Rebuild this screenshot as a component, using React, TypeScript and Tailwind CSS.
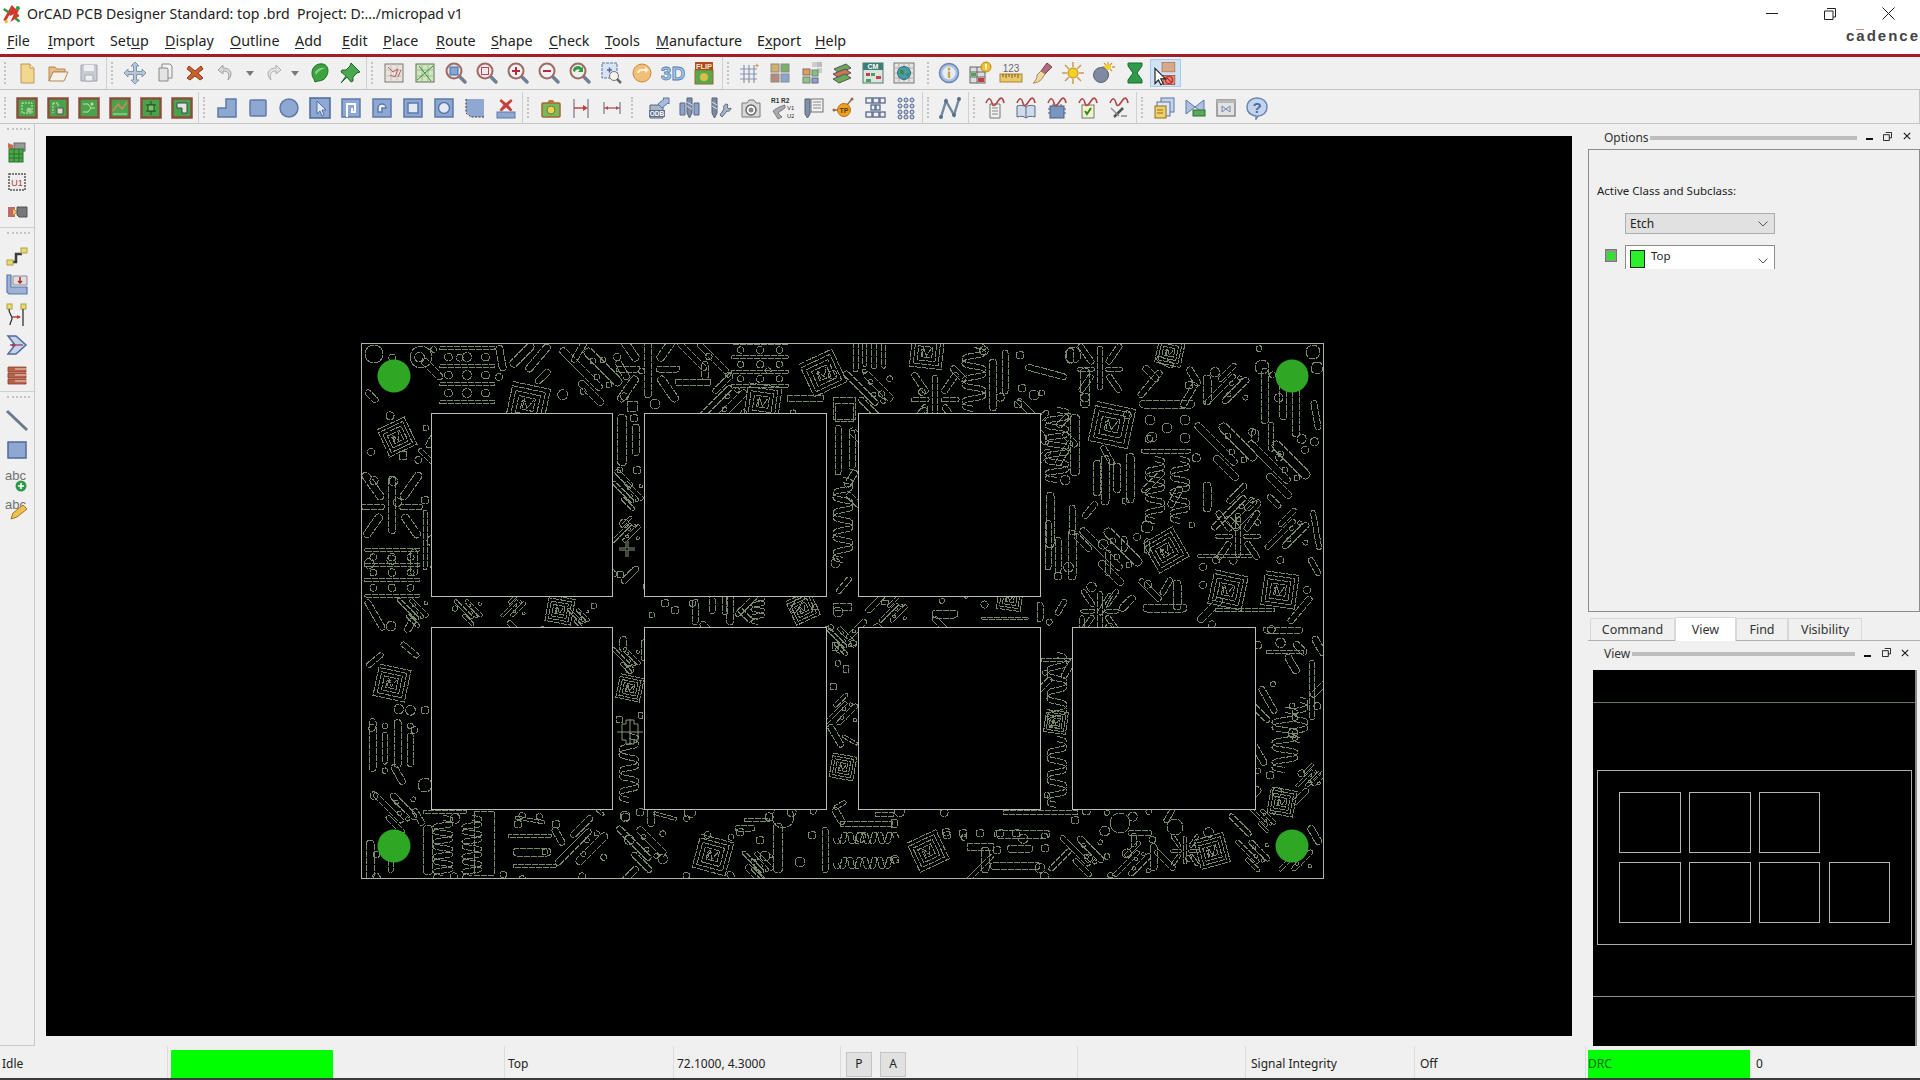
import type { ReactNode } from 'react';

// ---------- board artwork: everything collects into one big path ----------
const rad = (d: number) => (d * Math.PI) / 180;
const n1 = (v: number) => v.toFixed(1);

function pill(cx: number, cy: number, len: number, w: number, deg: number) {
  const r = w / 2;
  const a = rad(deg);
  const dx = Math.cos(a) * (len / 2 - r);
  const dy = Math.sin(a) * (len / 2 - r);
  const nx = -Math.sin(a) * r;
  const ny = Math.cos(a) * r;
  return `M${n1(cx - dx + nx)} ${n1(cy - dy + ny)}L${n1(cx + dx + nx)} ${n1(cy + dy + ny)}A${r} ${r} 0 0 0 ${n1(cx + dx - nx)} ${n1(cy + dy - ny)}L${n1(cx - dx - nx)} ${n1(cy - dy - ny)}A${r} ${r} 0 0 0 ${n1(cx - dx + nx)} ${n1(cy - dy + ny)}Z`;
}

function ring(cx: number, cy: number, r: number) {
  return `M${cx - r} ${cy}A${r} ${r} 0 1 0 ${cx + r} ${cy}A${r} ${r} 0 1 0 ${cx - r} ${cy}Z`;
}

function box(cx: number, cy: number, w: number, h: number) {
  return `M${cx - w / 2} ${cy - h / 2}h${w}v${h}h${-w}Z`;
}

function spiral(cx: number, cy: number, size: number, deg: number) {
  const a = rad(deg);
  const pt = (x: number, y: number) =>
    `${n1(cx + Math.cos(a) * x - Math.sin(a) * y)} ${n1(cy + Math.sin(a) * x + Math.cos(a) * y)}`;
  let s = size / 2;
  let d = `M${pt(-s, -s)}`;
  const step = size / 9;
  while (s > step) {
    d += `L${pt(s, -s)}L${pt(s, s)}L${pt(-s, s)}L${pt(-s, -s + step)}`;
    s -= step;
    d += `L${pt(-s, -s)}`;
  }
  d += `M${pt(-size / 8, size / 8)}L${pt(-size / 8, -size / 8)}L${pt(0, size / 8)}L${pt(size / 8, -size / 8)}`;
  return d;
}

// serpentine band: two rounded runs, one pitch apart
function wave(cx: number, cy: number, w: number, h: number, n: number, horizontal = false) {
  const thick = Math.min(2.6, h / n / 5);
  const build = (off: number) => {
    let d = '';
    for (let i = 0; i <= n * 16; i++) {
      const t = i / (n * 16);
      const along = -h / 2 + t * h + off;
      const sn = Math.sin(t * n * Math.PI * 2);
      const across = Math.sign(sn) * Math.pow(Math.abs(sn), 0.45) * (w / 2 - 2);
      const x = horizontal ? cx + along : cx + across;
      const y = horizontal ? cy + across : cy + along;
      d += `${i === 0 ? 'M' : 'L'}${n1(x)} ${n1(y)}`;
    }
    return d;
  };
  return build(-thick) + build(thick);
}

function hatch(cx: number, cy: number, flip = false, s = 1) {
  const a = flip ? -45 : 45;
  const m = flip ? -1 : 1;
  return [
    pill(cx - 14 * s, cy - 6 * s * m, 58 * s, 7 * s, a),
    pill(cx + 8 * s, cy - 8 * s * m, 50 * s, 9 * s, a),
    pill(cx - 4 * s, cy + 18 * s * m, 34 * s, 7 * s, a),
    ring(cx - 2 * s, cy - 14 * s * m, 3 * s),
    ring(cx + 2 * s, cy + 2 * s * m, 3 * s),
    ring(cx + 14 * s, cy + 10 * s * m, 3 * s),
    ring(cx + 22 * s, cy - 18 * s * m, 3.5 * s),
  ].join('');
}

function star(cx: number, cy: number, s = 1) {
  return [
    pill(cx, cy, 62 * s, 7 * s, 90),
    pill(cx - 20 * s, cy - 20 * s, 34 * s, 8 * s, 55),
    pill(cx + 20 * s, cy - 20 * s, 34 * s, 8 * s, -55),
    pill(cx - 20 * s, cy + 2 * s, 24 * s, 6 * s, 0),
    pill(cx + 20 * s, cy + 2 * s, 24 * s, 6 * s, 0),
    pill(cx - 20 * s, cy + 22 * s, 30 * s, 8 * s, -55),
    pill(cx + 20 * s, cy + 22 * s, 30 * s, 8 * s, 55),
  ].join('');
}

function rows(cx: number, cy: number, w: number, s = 1) {
  const o: string[] = [];
  [-24, -6, 12, 30].forEach((y) => o.push(pill(cx, cy + y * s, w, 3, 0)));
  [-15, 3, 21].forEach((y) => {
    o.push(ring(cx - w / 3, cy + y * s, 4 * s), ring(cx, cy + y * s, 4.5 * s), ring(cx + w / 3, cy + y * s, 4 * s));
  });
  return o.join('');
}

function vpills(cx: number, cy: number, s = 1) {
  return [
    pill(cx - 24 * s, cy, 66 * s, 8 * s, 90),
    pill(cx - 9 * s, cy + 4 * s, 40 * s, 6 * s, 90),
    pill(cx + 7 * s, cy - 2 * s, 60 * s, 9 * s, 90),
    pill(cx + 23 * s, cy + 6 * s, 42 * s, 7 * s, 90),
    ring(cx - 9 * s, cy - 24 * s, 3.5 * s),
    ring(cx + 23 * s, cy - 24 * s, 3.5 * s),
    ring(cx - 9 * s, cy + 32 * s, 3.5 * s),
  ].join('');
}

// small parts scattered over the gaps so the copper looks as busy as the real board
function filler() {
  let seed = 20240611;
  const rnd = () => {
    seed = (seed * 1664525 + 1013904223) % 4294967296;
    return seed / 4294967296;
  };
  const out: string[] = [];
  for (let x = 368; x < 1322; x += 21) {
    for (let y = 348; y < 876; y += 21) {
      const r = rnd();
      const px = x + rnd() * 10;
      const py = y + rnd() * 10;
      if (r < 0.16) out.push(ring(+px.toFixed(1), +py.toFixed(1), 2.5 + rnd() * 2.5));
      else if (r < 0.26) {
        const deg = [45, -45, 90, 60, -60][Math.floor(rnd() * 5)];
        out.push(pill(px, py, 14 + rnd() * 16, 5 + rnd() * 2, deg));
      }
    }
  }
  return out.join('');
}

const boardPath = [
  filler(),
  // top strip
  ring(374, 354, 9), ring(421, 357, 11), rows(467, 372, 56), pill(501, 358, 26, 7, 80),
  pill(522, 355, 32, 8, -45), pill(538, 358, 34, 7, -50), spiral(528, 404, 38, 12),
  hatch(595, 375), ring(603, 360, 3), star(648, 367), box(632, 406, 10, 10), ring(655, 404, 5),
  pill(713, 358, 42, 6, 45), pill(692, 356, 40, 6, 45), box(693, 382, 35, 6),
  rows(760, 362, 58, 0.8), spiral(823, 373, 36, -25), spiral(763, 402, 34, 8),
  box(805, 398, 36, 6), hatch(726, 398, true, 0.8), box(844, 408, 22, 22), hatch(872, 393, false, 0.8),
  vpills(870, 352, 0.6), spiral(927, 352, 32, 6), star(935, 398, 0.75), wave(974, 377, 28, 64, 3),
  pill(993, 385, 52, 7, 90), pill(1005, 372, 44, 6, 90), ring(1020, 355, 4), ring(1022, 388, 4), ring(1034, 395, 5),
  ring(1018, 404, 4), pill(1046, 372, 42, 6, 15), pill(1028, 410, 30, 6, 45),
  // right block
  ring(1073, 355, 8), star(1100, 368, 0.7), pill(1085, 388, 40, 9, 90), spiral(1112, 425, 40, 12),
  spiral(1170, 352, 26, 12), pill(1150, 384, 34, 6, -50), pill(1165, 362, 18, 6, 30), ring(1189, 385, 4),
  pill(1207, 390, 30, 8, 90), hatch(1230, 385, true, 0.7), ring(1262, 367, 7), ring(1313, 352, 7), ring(1317, 368, 6),
  pill(1265, 396, 56, 7, 90), pill(1283, 400, 40, 7, 90), pill(1296, 412, 50, 7, 90), pill(1316, 415, 30, 6, 80),
  wave(1057, 445, 28, 70, 4), pill(1075, 445, 62, 9, 90), pill(1167, 404, 55, 8, 0),
  ring(1150, 420, 5), ring(1167, 428, 5), ring(1185, 420, 5), ring(1152, 437, 5), ring(1185, 438, 5), pill(1166, 451, 50, 4, 0),
  wave(1155, 490, 24, 62, 3), wave(1180, 490, 24, 62, 3), pill(1097, 478, 36, 7, 90),
  pill(1105, 480, 50, 8, 90), pill(1117, 478, 30, 7, 90), pill(1130, 478, 50, 8, 90), pill(1090, 510, 20, 6, -50),
  hatch(1230, 450), hatch(1283, 468), hatch(1240, 508, true, 0.8), pill(1207, 497, 30, 8, 90),
  pill(1050, 520, 56, 8, 90), pill(1072, 520, 30, 6, 90), hatch(1290, 530, true, 0.7), star(1238, 535, 0.7), pill(1316, 530, 40, 5, 80),
  pill(1048, 545, 50, 6, 90), pill(1058, 555, 36, 6, 90), pill(1072, 555, 50, 8, 90), ring(1058, 576, 4), hatch(1115, 555),
  spiral(1166, 550, 34, -30), ring(1147, 527, 6), ring(1192, 525, 3), pill(1225, 556, 55, 3, 0),
  spiral(1228, 590, 34, 12), spiral(1280, 590, 34, 8), ring(1203, 567, 3.5), ring(1203, 585, 3.5), ring(1307, 590, 3.5),
  pill(1165, 608, 44, 8, 0), pill(1177, 595, 30, 8, 90), pill(1150, 590, 30, 6, 45), star(1100, 610, 0.6), pill(1245, 610, 60, 3, 0),
  pill(1210, 610, 34, 7, -45), pill(1300, 610, 34, 6, -50),
  // gaps between the cut-outs
  pill(622, 440, 52, 9, 90), pill(636, 440, 32, 7, 90), ring(634, 418, 4), ring(637, 470, 4), ring(620, 470, 3),
  hatch(630, 495, false, 0.5), hatch(628, 530, true, 0.45), box(620, 574, 6, 6), pill(630, 575, 22, 6, -45),
  box(844, 412, 18, 18), pill(838, 450, 50, 6, 90), pill(852, 450, 40, 6, 90), wave(843, 520, 24, 80, 4), pill(844, 585, 20, 5, -50),
  spiral(630, 688, 24, 12), hatch(628, 660, false, 0.45), wave(629, 768, 24, 64, 3), box(619, 719, 6, 6), box(640, 715, 4, 6),
  hatch(843, 640, false, 0.5), box(835, 646, 6, 8), box(846, 669, 5, 7), box(833, 686, 6, 6), hatch(843, 710, true, 0.55),
  spiral(843, 767, 24, 10), pill(850, 740, 18, 3, 30), pill(840, 805, 14, 4, -30),
  wave(1057, 690, 24, 70, 3), spiral(1056, 722, 22, 8), wave(1057, 772, 24, 66, 3), pill(1056, 660, 30, 3, 0),
  // middle strip
  hatch(470, 612, false, 0.45), hatch(515, 606, true, 0.4), spiral(560, 610, 26, 10), ring(594, 606, 3), hatch(580, 618, false, 0.35),
  spiral(803, 608, 26, -25), wave(758, 610, 18, 24, 2), pill(730, 610, 30, 7, 90), ring(665, 603, 4), ring(675, 610, 4), pill(712, 605, 18, 6, 90),
  pill(695, 612, 26, 6, 90), pill(725, 605, 20, 5, 90), ring(652, 615, 3), pill(745, 615, 18, 5, 45), ring(838, 612, 5),
  box(842, 607, 18, 7), hatch(895, 610, true, 0.45), pill(945, 614, 26, 8, 0), box(885, 602, 7, 4), pill(1005, 618, 48, 2, 0),
  spiral(1010, 598, 24, 8), pill(1040, 612, 20, 6, 90),
  // left strip
  spiral(397, 437, 30, -25), ring(371, 452, 3.5), box(403, 455, 7, 8), star(392, 505, 0.95), ring(426, 428, 3),
  pill(427, 457, 22, 4, 45), ring(425, 500, 4), pill(425, 540, 60, 4, 90), rows(392, 570, 56, 0.85),
  hatch(415, 612, false, 0.5), pill(375, 615, 34, 6, 60), spiral(392, 683, 32, 12), pill(375, 660, 20, 5, -40), pill(410, 650, 22, 5, 40),
  vpills(392, 745, 0.8), ring(425, 710, 4), hatch(398, 812, false, 0.7), ring(425, 785, 7), pill(428, 850, 50, 9, 90), pill(370, 860, 40, 8, 90),
  // bottom strip
  wave(443, 848, 24, 60, 4), wave(472, 848, 24, 60, 4), pill(445, 812, 44, 3, 0), box(484, 843, 20, 64),
  pill(530, 820, 30, 3, 10), ring(518, 824, 4), pill(530, 836, 44, 3, 0), pill(532, 852, 38, 8, 0), ring(545, 852, 3), pill(535, 866, 44, 3, 0),
  ring(556, 824, 4), hatch(585, 842, true, 0.85), hatch(645, 848, false, 0.8), pill(600, 812, 10, 3, 40), ring(625, 816, 5),
  ring(640, 812, 4), pill(665, 816, 24, 3, 15), ring(690, 812, 6),
  spiral(713, 855, 34, 15), ring(740, 832, 4), pill(745, 828, 20, 6, 0), ring(760, 840, 4), pill(778, 848, 50, 9, 90), ring(765, 856, 5),
  hatch(760, 865, false, 0.5), ring(783, 817, 11), pill(757, 820, 26, 3, 0), ring(800, 862, 5), ring(812, 835, 4), pill(825, 850, 46, 6, 90),
  wave(866, 838, 16, 60, 4, true), wave(866, 863, 16, 60, 4, true), box(866, 824, 52, 5), box(884, 814, 18, 4), box(894, 823, 6, 8),
  spiral(928, 851, 32, -25), ring(946, 832, 4), ring(963, 833, 4), ring(980, 833, 4), ring(1000, 833, 4), ring(1016, 833, 4),
  pill(1022, 834, 56, 8, 0), ring(947, 835, 4), box(980, 847, 26, 7), pill(1020, 849, 26, 7, 0), ring(997, 850, 4), ring(1045, 848, 4),
  pill(1015, 866, 50, 7, 0), pill(980, 868, 36, 4, -45), pill(985, 860, 26, 8, 90), ring(1040, 868, 5),
  box(1040, 812, 74, 4), ring(1075, 820, 4), hatch(1085, 855, false, 0.7), pill(1060, 860, 30, 5, -45), ring(1120, 823, 10), pill(1140, 833, 24, 5, 0),
  hatch(1135, 860, true, 0.6), ring(1175, 827, 8), pill(1165, 860, 28, 6, 45), spiral(1212, 851, 30, -15), star(1185, 850, 0.45),
  hatch(1255, 855, false, 0.55), pill(1240, 825, 30, 5, 45), hatch(1298, 856, true, 0.55), spiral(1282, 802, 26, 10),
  wave(1285, 740, 30, 60, 3), wave(1300, 720, 20, 40, 2), pill(1285, 652, 38, 3, 0), pill(1283, 630, 40, 6, 0), pill(1312, 690, 60, 5, 90),
  ring(1270, 775, 4), pill(1268, 700, 30, 6, 60), hatch(1310, 776, true, 0.4), hatch(1265, 820, false, 0.4),
].join('');

const cutouts = [
  [431, 413, 181, 183], [644, 413, 182, 183], [858, 413, 182, 183],
  [431, 627, 181, 182], [644, 627, 182, 182], [858, 627, 182, 182], [1072, 627, 183, 182],
];
const holes = [[394, 376], [1292, 376], [394, 846], [1292, 846]];

function Board() {
  return (
    <svg viewBox="46 136 1526 900" className="block w-full h-full">
      <defs>
        <clipPath id="brd"><rect x="362" y="343" width="962" height="535" /></clipPath>
      </defs>
      <g clipPath="url(#brd)">
        <path d={boardPath} fill="none" stroke="#7a8a6c" strokeWidth="1" strokeDasharray="6 1" shapeRendering="crispEdges" />
      </g>
      <path d="M622 724h4v-4h8v4h4v16h-4v4h-8v-4h-4zM617 732h26M630 719v26" fill="none" stroke="#87977a" />
      <path d="M627 541v16M619 549h16" fill="none" stroke="#87977a" strokeWidth="3" />
      <path d="M627 541v16M619 549h16" fill="none" stroke="#000" />
      {cutouts.map(([x, y, w, h]) => (
        <rect key={`${x}-${y}`} x={x + 0.5} y={y + 0.5} width={w} height={h} fill="#000" stroke="#b9bdb4" />
      ))}
      <rect x="361.5" y="343.5" width="962" height="535" fill="none" stroke="#aeb3a7" />
      {holes.map(([x, y]) => (
        <circle key={`${x}-${y}`} cx={x} cy={y} r="16.5" fill="#2ea724" />
      ))}
    </svg>
  );
}

// ---------- toolbar icons ----------
function Ic({ children, className = 'w-[24px] h-[24px]' }: { children: ReactNode; className?: string }) {
  return <svg viewBox="0 0 24 24" className={className}>{children}</svg>;
}

const Mag = ({ lens = '#eaf0f8', children }: { lens?: string; children?: ReactNode }) => (
  <Ic>
    <path d="M15 15l6 6" stroke="#6f7f96" strokeWidth="3.5" strokeLinecap="round" />
    <circle cx="10" cy="10" r="7.5" fill={lens} stroke="#a06a60" strokeWidth="2" />
    {children}
  </Ic>
);

const Green = ({ children }: { children: ReactNode }) => (
  <Ic>
    <rect x="2.5" y="2.5" width="19" height="19" fill="#4aa34a" stroke="#8a4f3c" strokeWidth="2.5" />
    {children}
  </Ic>
);

const Blue = ({ children }: { children: ReactNode }) => (
  <Ic>
    <g fill="#8fa8d2" stroke="#5c79aa" strokeWidth="1.5">{children}</g>
  </Ic>
);

const Wave = ({ children }: { children: ReactNode }) => (
  <Ic>
    {children}
    <path d="M3 7c3-7 5-4 6 0s3 3 6-2 5-3 6 2" fill="none" stroke="#b0484a" strokeWidth="1.6" />
  </Ic>
);

const ic: Record<string, ReactNode> = {
  file: <Ic><path d="M6 3h9l4 4v15H6z" fill="#f3d690" stroke="#b89a5c" /><path d="M15 3v4h4" fill="#fff3cc" stroke="#b89a5c" /></Ic>,
  open: <Ic><path d="M3 6h6l2 2h8v3H7l-4 9z" fill="#e9bd83" stroke="#b3875a" /><path d="M7 11h15l-4 9H3z" fill="#f6f1e6" stroke="#b3875a" /></Ic>,
  save: <Ic><path d="M4 4h16v16H4z" fill="#c9ccd2" stroke="#9ea2aa" /><path d="M7 4h10v6H7z" fill="#eef0f2" /><path d="M8 14h8v6H8z" fill="#eef0f2" stroke="#a8acb2" /></Ic>,
  move: <Ic><path d="M12 1l4 4h-2.5v5.5H19V8l4 4-4 4v-2.5h-5.5V19H16l-4 4-4-4h2.5v-5.5H5V16l-4-4 4-4v2.5h5.5V5H8z" fill="#b5c6d8" stroke="#7f95aa" /></Ic>,
  copy: <Ic><path d="M9 3h8l2 2v12H9z" fill="#f2f2f2" stroke="#888" /><path d="M6 7h8l1 1v12H6z" fill="#e4e4e4" stroke="#888" /></Ic>,
  del: <Ic><path d="M6 5l6 5 6-5 2 3-5 4 5 5-3 2-5-4-5 4-3-2 5-5-5-4z" fill="#c8612c" stroke="#8e3d1c" /></Ic>,
  undo: <Ic><path d="M9 4L4 9l5 4v-3c5 0 7 3 5 9 5-5 4-12-5-12z" fill="#d6d6d6" stroke="#a2a2a2" /></Ic>,
  redo: <Ic><path d="M15 4l5 5-5 4v-3c-5 0-7 3-5 9-5-5-4-12 5-12z" fill="#e2e2e2" stroke="#b0b0b0" /></Ic>,
  drop: <svg viewBox="0 0 10 10" className="w-[10px] h-[10px]"><path d="M1 3h8L5 8z" fill="#7a7a7a" /></svg>,
  ball: <Ic><path d="M4 12c0-6 5-10 11-9 5 1 6 7 4 11-2 5-6 6-9 6l-3 1-1-3c-1-1-2-3-2-6z" fill="#3ba33b" stroke="#1f6b28" /><path d="M7 11c3-4 7-5 10-4-3 1-7 3-9 7z" fill="#8cd08c" /></Ic>,
  pin: <Ic><path d="M13 2l9 9-3 1-4 4 0 4-2 1-4-5-6 6 5-7-5-4 1-2 4 0 4-4z" fill="#4aa84f" stroke="#1e6a2a" /></Ic>,
  rats: <Ic><rect x="3" y="3" width="18" height="18" fill="#e9e3dc" stroke="#777" /><path d="M3 9h18M3 15h18M9 3v18M15 3v18" stroke="#c4c4c4" /><path d="M6 6l5 5 5-3-3 8-5-2M16 16l3-7" fill="none" stroke="#c05a62" /></Ic>,
  board: <Ic><rect x="3" y="3" width="18" height="18" fill="#cfe6c0" stroke="#5f7052" /><path d="M3 9h18M3 15h18M9 3v18M15 3v18" stroke="#9dba8e" /><path d="M4 19L20 5M6 5l12 15" stroke="#3b8a3b" fill="none" /></Ic>,
  zoomFit: <Mag lens="#dfe9f6"><rect x="6" y="6" width="8" height="8" fill="#88a4d2" stroke="#486b9f" /></Mag>,
  zoomWin: <Mag lens="#f5e7ea"><rect x="6.5" y="6.5" width="7" height="7" fill="none" stroke="#b04a60" /></Mag>,
  zoomIn: <Mag lens="#eef1f7"><path d="M10 6v8M6 10h8" stroke="#b62a36" strokeWidth="2" /></Mag>,
  zoomOut: <Mag lens="#eef1f7"><path d="M6 10h8" stroke="#b62a36" strokeWidth="2" /></Mag>,
  zoomPrev: <Mag lens="#eaf1ea"><path d="M5 10a5 5 0 019-3l1-2v6h-5l2-2a3 3 0 00-5 2z" fill="#2f9a3f" /></Mag>,
  zoomWorld: <Ic><rect x="3" y="2" width="15" height="15" fill="#d8e4f4" stroke="#5675a5" strokeDasharray="3 1" /><path d="M8 9h5M10.500 6.500v5" stroke="#4d6c9c" strokeWidth="1.500" /><circle cx="15" cy="15" r="4.500" fill="#f2f2f2" stroke="#8a7060" /><path d="M18 18l4 4" stroke="#666" strokeWidth="2.500" /></Ic>,
  refresh: <Ic><circle cx="12" cy="12" r="9" fill="#f0c078" stroke="#c88a3a" /><path d="M7 12a5 5 0 015-4h3v-2l4 3-4 3v-2h-3a3 3 0 00-3 2z" fill="#fff3dc" /></Ic>,
  threeD: <Ic><text x="12" y="19" textAnchor="middle" fontSize="19" fontWeight="700" fontFamily="'Liberation Sans',sans-serif" fill="#a9c6e4" stroke="#4f7fb0" strokeWidth="0.800">3D</text></Ic>,
  flip: <Ic><rect x="3" y="1" width="18" height="8" fill="#b04a20" /><text x="12" y="8" textAnchor="middle" fontSize="7.500" fontWeight="700" fontFamily="'Liberation Sans',sans-serif" fill="#f8e8c0">FLIP</text><rect x="3" y="9" width="18" height="14" fill="#59a84a" stroke="#8a6a2c" /><circle cx="12" cy="16" r="4" fill="#d8c048" /></Ic>,
  grid: <Ic><path d="M3 8h17M3 13h17M3 18h17M7 4v18M12 4v18M17 4v18" stroke="#8793b0" strokeWidth="1.200" /><path d="M20 2l.7 2 2 .5-2 .5-.7 2-.7-2-2-.5 2-.5z" fill="#e09050" /></Ic>,
  colors: <Ic><rect x="3" y="3" width="8" height="8" fill="#d2b068" stroke="#8a8a8a" /><rect x="13" y="3" width="8" height="8" fill="#79b06a" stroke="#8a8a8a" /><rect x="3" y="13" width="8" height="8" fill="#b88a7a" stroke="#8a8a8a" /><rect x="13" y="13" width="8" height="8" fill="#8ca6d0" stroke="#8a8a8a" /></Ic>,
  blocks: <Ic><rect x="13" y="1" width="5" height="5" fill="#ccc" /><rect x="18" y="1" width="5" height="5" fill="#bbb" /><rect x="18" y="7" width="5" height="5" fill="#ccc" /><rect x="4" y="8" width="7" height="6" fill="#e0a060" stroke="#866" /><rect x="4" y="16" width="7" height="6" fill="#9abf8a" stroke="#686" /><rect x="13" y="9" width="6" height="6" fill="#88c088" stroke="#686" /><rect x="13" y="17" width="6" height="5" fill="#8aa4d0" stroke="#668" /></Ic>,
  layers: <Ic><path d="M4 8l12-5 5 4-12 5z" fill="#6aa85a" stroke="#555" /><path d="M3 13l12-5 6 4-12 5z" fill="#c8735a" stroke="#555" /><path d="M3 18l12-5 6 4-12 5z" fill="#6aa85a" stroke="#555" /></Ic>,
  cm: <Ic><rect x="2" y="2" width="20" height="20" fill="#dbe4de" stroke="#4d7a70" /><rect x="2" y="2" width="20" height="7" fill="#3d7f78" /><text x="12" y="8" textAnchor="middle" fontSize="7" fontWeight="700" fontFamily="'Liberation Sans',sans-serif" fill="#fff">CM</text><path d="M5 12h4v3H5zM15 15h5v3h-5z" fill="#c8404a" /><path d="M10 12h4v3h-4zM5 18h5v3H5z" fill="#4aa35a" /></Ic>,
  globe: <Ic><rect x="2" y="2" width="20" height="20" fill="#e4e4e4" stroke="#777" /><path d="M2 7h20M2 12h20M2 17h20M7 2v20M12 2v20M17 2v20" stroke="#aaa" /><circle cx="12" cy="12" r="6.500" fill="#4b9aa8" stroke="#2d6a78" /><path d="M8 9c3-1 4 1 4 3s-3 2-4 0zM14 13l3-1-1 4z" fill="#3a8a4a" /></Ic>,
  info: <Ic><circle cx="12" cy="12" r="9.500" fill="#a9bfe0" stroke="#6a85b5" strokeWidth="1.500" /><circle cx="12" cy="12" r="6.500" fill="#e6edf8" /><circle cx="12" cy="8" r="1.500" fill="#c9a83a" /><rect x="10.800" y="10.500" width="2.400" height="6.500" fill="#c9a83a" /></Ic>,
  tableInfo: <Ic><rect x="2" y="6" width="15" height="16" fill="#dcdcdc" stroke="#666" /><path d="M2 11h15M2 16h15M9 6v16" stroke="#666" /><rect x="3" y="12" width="5" height="3" fill="#4aa35a" /><rect x="10" y="17" width="6" height="4" fill="#c04040" /><circle cx="18" cy="6" r="5" fill="#f0c030" stroke="#b08a20" /><rect x="17.300" y="3" width="1.400" height="5.500" fill="#fff" /></Ic>,
  ruler: <Ic><text x="12" y="11" textAnchor="middle" fontSize="10" fontWeight="500" fontFamily="'Liberation Sans',sans-serif" fill="#6a6a6a">123</text><rect x="1" y="13" width="22" height="8" fill="#e8c868" stroke="#a88830" /><path d="M4 13v3M7 13v4M10 13v3M13 13v4M16 13v3M19 13v4" stroke="#7a5a20" /></Ic>,
  brush: <Ic><path d="M17 2l5 4-7 7-4-3z" fill="#b06a78" stroke="#7a4050" /><path d="M11 10l4 3-2 3c-2 4-6 6-10 6 3-2 4-5 4-8z" fill="#f0d8a0" stroke="#a88850" /></Ic>,
  sun: <Ic><circle cx="12" cy="12" r="5" fill="#f4d020" stroke="#c08a20" /><path d="M12 1v5M12 18v5M1 12h5M18 12h5M4 4l4 4M16 16l4 4M20 4l-4 4M8 16l-4 4" stroke="#c89a50" strokeWidth="1.500" /></Ic>,
  bomb: <Ic><path d="M16 1v4M16 11v2M10 6h3M20 6h3M12 2l3 3M20 10l-2-2M20 2l-3 3" stroke="#c89a50" strokeWidth="1.300" /><circle cx="16" cy="6" r="3" fill="#f4d020" /><circle cx="9" cy="14" r="7.500" fill="#7f8aa0" stroke="#56607a" /></Ic>,
  hourglass: <Ic><path d="M5 2h14v3l-5 7 5 7v3H5v-3l5-7-5-7z" fill="#2f9a4a" stroke="#1a6a30" /></Ic>,
  noEntry: <Ic className="w-[30px] h-[28px]"><rect x="9" y="3" width="11" height="8" fill="#d8a888" stroke="#a07050" strokeWidth="0.600" /><rect x="10" y="14" width="10" height="8" fill="#e08a7a" stroke="#a04030" strokeWidth="0.600" /><circle cx="15" cy="18" r="3" fill="none" stroke="#c02020" /><path d="M13 16l4 4" stroke="#c02020" /><path d="M3 8v13l3-3 2 4 2-1-2-4h4z" fill="#fff" stroke="#222" strokeWidth="1" /></Ic>,
  g1: <Green><rect x="7" y="7" width="10" height="10" fill="none" stroke="#cfe8c0" strokeDasharray="2 1" /><circle cx="14" cy="14" r="2.500" fill="#9ad08a" /></Green>,
  g2: <Green><path d="M7 7h5v5M7 7v10" fill="none" stroke="#cfe8c0" strokeDasharray="2 1" /><rect x="11" y="12" width="6" height="6" fill="#d8d8c8" stroke="#555" /></Green>,
  g3: <Green><path d="M6 8h5l3 4-3 4H6M14 12h4" fill="none" stroke="#bde0aa" /><circle cx="15" cy="8" r="1.500" fill="#bde0aa" /></Green>,
  g4: <Green><path d="M5 15l5-7 4 5 5-7" fill="none" stroke="#d88060" strokeWidth="1.500" /><path d="M5 18h14" stroke="#bde0aa" /></Green>,
  g5: <Green><path d="M12 5v14M7 9h10M7 15h10" stroke="#234f20" /><rect x="9" y="9" width="6" height="6" fill="#7cc06c" stroke="#234f20" /></Green>,
  g6: <Green><path d="M7 7h10v10h-5v-5H7z" fill="#e4e4d8" stroke="#345" /></Green>,
  sL: <Blue><path d="M3 21V12h8V3h10v18z" /></Blue>,
  sRect: <Blue><rect x="4" y="4" width="16" height="16" rx="1" /></Blue>,
  sCirc: <Blue><circle cx="12" cy="12" r="9" /></Blue>,
  sArrow: <Ic><rect x="2" y="2" width="20" height="20" fill="#8fa8d2" stroke="#4b689a" strokeWidth="1.500" /><path d="M9 5v13l3-3 2 5 2-1-2-5h4z" fill="#dfe8f6" stroke="#3b5a8c" strokeWidth="0.800" /></Ic>,
  sVoid: <Blue><rect x="3" y="3" width="18" height="18" /><path d="M8 21V8h8v8h-3v-4" fill="none" stroke="#fff" strokeWidth="2" /></Blue>,
  sArc: <Blue><rect x="3" y="3" width="18" height="18" /><path d="M8 16v-4a4 4 0 118 0h-4v4z" fill="#eef2f8" /></Blue>,
  sFrame: <Blue><rect x="3" y="3" width="18" height="18" /><rect x="7" y="7" width="10" height="10" fill="#e4eaf4" /></Blue>,
  sFrameC: <Blue><rect x="3" y="3" width="18" height="18" /><circle cx="12" cy="12" r="5.500" fill="#e4eaf4" /></Blue>,
  sPart: <Ic><path d="M3 3h18v18H8l-5-5z" fill="#8fa8d2" /><path d="M3 3v14l5 4h13" fill="none" stroke="#333" strokeDasharray="2 1.500" /></Ic>,
  sDel: <Ic><rect x="3" y="16" width="18" height="6" fill="#8fa8d2" stroke="#5c79aa" /><path d="M7 3l5 4 5-4 1.500 2-4 4 4 5-2 1.500-4.500-4-4.500 4-2-1.500 4-5-4-4z" fill="#c8403a" /></Ic>,
  pkg: <Ic><rect x="3" y="7" width="18" height="14" rx="1" fill="#79b85c" stroke="#a06a30" strokeWidth="1.500" /><path d="M8 7l2-3h4l2 3z" fill="#c0763a" /><circle cx="12" cy="14" r="4" fill="#f0d050" stroke="#6a8030" /></Ic>,
  dimV: <Ic><path d="M5 3v19M19 3v19" stroke="#90909a" strokeWidth="1.500" /><path d="M5 12h11" stroke="#c04040" strokeWidth="1.500" /><path d="M19 12l-5-3v6z" fill="#c04040" /></Ic>,
  dimH: <Ic><path d="M4 6v12M20 6v12" stroke="#90909a" strokeWidth="1.500" /><path d="M4 12h16" stroke="#b05050" strokeWidth="1.300" /><path d="M5 12l3-2v4zM19 12l-3-2v4z" fill="#b05050" /></Ic>,
  odb: <Ic><path d="M4 9h13v13H4z" fill="#aab6c8" stroke="#56667f" /><rect x="3" y="14" width="16" height="7" fill="#5f7290" /><text x="11" y="20" textAnchor="middle" fontSize="6.500" fontWeight="700" fontFamily="'Liberation Sans',sans-serif" fill="#fff">ODB</text><path d="M12 8l6-5-1-1h6v6l-1-1-6 5z" fill="#a8bcd8" stroke="#5c78a0" /></Ic>,
  drill: <Ic><path d="M10 2h5v15l-2.500 5-2.500-5z" fill="#8090a8" stroke="#52607a" /><path d="M3 7h5v12H3zM17 7h5v12h-5z" fill="#8fa4c8" stroke="#56688a" /><path d="M10 6l5 3M10 10l5 3" stroke="#dde" /></Ic>,
  drillW: <Ic><path d="M4 2h5v15l-2.500 5L4 17z" fill="#7e8aa0" stroke="#52607a" /><path d="M4 6l5 3M4 10l5 3" stroke="#dde" /><path d="M19 8c-3 0-4 3-3 5l-4 6 2 2 5-6c2 1 4-1 4-3l-2 1-2-2 1-2z" fill="#a8b4c8" stroke="#5c6a80" /></Ic>,
  cam: <Ic><path d="M3 7h5l2-3h5l2 3h4v14H3z" fill="#d8d8d8" stroke="#7a7a7a" /><circle cx="12" cy="14" r="5" fill="#fff" stroke="#666" strokeWidth="1.500" /><circle cx="12" cy="14" r="2.500" fill="#888" /></Ic>,
  refs: <Ic><text x="1" y="7" fontSize="6.500" fontWeight="700" fontFamily="'Liberation Sans',sans-serif" fill="#333">R1 R2</text><text x="17" y="14" fontSize="6" fontFamily="'Liberation Sans',sans-serif" fill="#333">V1</text><text x="17" y="22" fontSize="6" fontFamily="'Liberation Sans',sans-serif" fill="#333">U2</text><path d="M3 15c3-3 8-5 12-6v3l-7 5 4 4-4 2z" fill="#a8a8b0" stroke="#666" strokeWidth="0.700" /></Ic>,
  drillDoc: <Ic><path d="M4 3h5v15l-2.500 4L4 18z" fill="#8090a8" stroke="#52607a" /><rect x="10" y="3" width="12" height="13" fill="#f2f2f2" stroke="#707070" /><path d="M12 6h8M12 9h8M12 12h8" stroke="#888" /></Ic>,
  tp: <Ic><path d="M2 14h7M15 9l5-6" stroke="#9a6a50" strokeWidth="1.500" /><circle cx="20" cy="3" r="1.500" fill="#9a6a50" /><circle cx="2" cy="14" r="1.500" fill="#9a6a50" /><circle cx="12" cy="14" r="6.500" fill="#eea020" stroke="#b07010" /><text x="12" y="17" textAnchor="middle" fontSize="7" fontWeight="700" fontFamily="'Liberation Sans',sans-serif" fill="#5a3a08">TP</text></Ic>,
  cells: <Ic><g fill="none" stroke="#56688c" strokeWidth="1.300"><rect x="3" y="2" width="6" height="5" /><rect x="10" y="2" width="6" height="5" /><rect x="17" y="2" width="5" height="5" /><rect x="8" y="9" width="4" height="5" /><rect x="13" y="9" width="4" height="5" /><rect x="3" y="16" width="6" height="5" /><rect x="10" y="16" width="6" height="5" /><rect x="17" y="16" width="5" height="5" /></g></Ic>,
  dots: <Ic><g fill="#c4d0e6" stroke="#56688c">{[4, 10, 16].flatMap((x) => [4, 10, 16, 21].map((y) => <circle key={`${x}-${y}`} cx={x + 2} cy={y} r="2" />))}</g></Ic>,
  poly: <Ic><path d="M3 21L8 5l8 14 5-16" fill="none" stroke="#74899f" strokeWidth="2.500" /><g fill="#56708c"><circle cx="3" cy="21" r="2" /><circle cx="8" cy="5" r="2" /><circle cx="16" cy="19" r="2" /><circle cx="21" cy="3" r="2" /></g></Ic>,
  wDoc: <Wave><path d="M7 8h10v14H7z" fill="#f0f0f0" stroke="#777" /><path d="M9 12h6M9 15h6M9 18h6" stroke="#888" /></Wave>,
  wBook: <Wave><path d="M3 10c3-1 7-1 9 1 2-2 6-2 9-1v11c-3-1-7-1-9 1-2-2-6-2-9-1z" fill="#cfdaea" stroke="#5c6a80" /><path d="M12 11v11" stroke="#5c6a80" /></Wave>,
  wChip: <Wave><rect x="5" y="10" width="14" height="12" fill="#7a96c0" stroke="#4a5f80" /><path d="M3 13h2M3 17h2M19 13h2M19 17h2M8 8v2M12 8v2M16 8v2" stroke="#4a5f80" /></Wave>,
  wCheck: <Wave><rect x="6" y="9" width="12" height="13" fill="#f6f2c8" stroke="#777" /><path d="M9 15l2 3 4-6" fill="none" stroke="#2a8a2a" strokeWidth="2" /></Wave>,
  wProbe: <Wave><path d="M7 21l9-9" stroke="#555" strokeWidth="2.500" /><path d="M4 12l8 8M14 20h6" stroke="#888" strokeWidth="1.300" /></Wave>,
  pages: <Ic><rect x="9" y="2" width="13" height="14" fill="#c6d4ec" stroke="#5b74a0" /><rect x="5" y="6" width="13" height="14" fill="#dce6f4" stroke="#5b74a0" /><rect x="3" y="10" width="11" height="12" fill="#f0d068" stroke="#907020" /><path d="M5 14h6M5 17h6" stroke="#907020" /></Ic>,
  bow: <Ic><path d="M3 4l9 7 9-7v14l-9-7-9 7z" fill="#aec0de" stroke="#5c78a8" /><rect x="10" y="14" width="12" height="6" fill="#5aa85a" stroke="#2f7030" /></Ic>,
  bowBox: <Ic><rect x="3" y="4" width="18" height="16" fill="#e2e2e2" stroke="#8a8a8a" strokeWidth="1.500" /><rect x="3" y="4" width="18" height="3" fill="#b8b8b8" /><path d="M8 10l4 3 4-3v6l-4-3-4 3z" fill="none" stroke="#7088aa" /></Ic>,
  help: <Ic><path d="M12 2c6 0 10 3.500 10 9s-4 9-9 9l-2 3v-3C5 19 2 16 2 11s4-9 10-9z" fill="#c4d4ec" stroke="#6a88b5" strokeWidth="1.500" /><text x="12" y="17" textAnchor="middle" fontSize="15" fontWeight="700" fontFamily="'Liberation Sans',sans-serif" fill="#4d6c9c">?</text></Ic>,
  placeTable: <Ic><path d="M3 3l5 2v5L3 8z" fill="#d06a50" /><rect x="9" y="3" width="11" height="8" fill="#999" stroke="#666" /><rect x="4" y="9" width="14" height="13" fill="#4aa84a" stroke="#2a702a" /><path d="M4 14h14M4 18h14M9 9v13M14 9v13" stroke="#2a702a" /></Ic>,
  u1: <Ic><rect x="4" y="4" width="16" height="16" fill="#eee" stroke="#555" strokeDasharray="2 1" strokeWidth="1.500" /><text x="12" y="15.500" textAnchor="middle" fontSize="9" fontFamily="'Liberation Sans',sans-serif" fontWeight="500" fill="#a84040">U1</text></Ic>,
  conn: <Ic><rect x="3" y="7" width="7" height="10" fill="#c06a6a" /><path d="M8 9l5 3-5 3" fill="#eec060" stroke="#c89a30" /><path d="M12 7h10v10H14l-2-2z" fill="#777" stroke="#555" /></Ic>,
  route: <Ic><path d="M5 19h6v-8h6" fill="none" stroke="#3a3a3a" strokeWidth="2.500" /><rect x="2" y="17" width="6" height="5" fill="#e8dc70" stroke="#b0a040" /><rect x="16" y="5" width="6" height="5" fill="#e8dc70" stroke="#b0a040" /></Ic>,
  slide: <Ic><path d="M2 2h4v12h16v7H4l-2-2z" fill="#9db2d6" stroke="#5c78a8" strokeWidth="1.200" /><path d="M8 3h14v9H8z" fill="#e6dcdc" stroke="#8a8aa0" /><path d="M15 4v6M13 8l2 2 2-2" fill="none" stroke="#a03030" strokeWidth="1.500" /></Ic>,
  fan: <Ic><rect x="2" y="1" width="5" height="5" fill="#e8dc70" stroke="#b0a040" /><rect x="16" y="1" width="5" height="5" fill="#e8dc70" stroke="#b0a040" /><path d="M4 6c0 6 3 6 3 9s-2 4-2 7M18 6v17" stroke="#333" fill="none" strokeWidth="1.300" /><path d="M7 14h8" stroke="#c04040" strokeWidth="1.500" /><path d="M16 14l-4-2v4z" fill="#c04040" /></Ic>,
  chev: <Ic><path d="M3 3h8l10 9-10 9H3l7-9z" fill="#c6d2ea" stroke="#4f6a9c" strokeWidth="1.500" /><path d="M5 12h13" stroke="#a04050" strokeWidth="1.300" /><circle cx="8" cy="12" r="1.500" fill="#a04050" /></Ic>,
  stack: <Ic><path d="M3 4h18v5H3zM3 10h18v5H3zM3 16h18v5H3z" fill="#b8604a" stroke="#8a4030" strokeWidth="0.800" /><path d="M10 6h12M10 12h12M10 18h12" stroke="#f0d8c8" /></Ic>,
  line: <Ic><path d="M2 3l20 19" stroke="#6c7a8c" strokeWidth="3" /></Ic>,
  rectB: <Ic><rect x="3" y="4" width="18" height="16" fill="#8fa8d2" stroke="#4f6a9c" strokeWidth="1.500" /></Ic>,
  abcPlus: <Ic><text x="0" y="12" fontSize="13" fontFamily="'Liberation Sans',sans-serif" fill="#707070">abc</text><circle cx="16" cy="18" r="5.500" fill="#2f9a4a" /><path d="M16 15v6M13 18h6" stroke="#fff" strokeWidth="1.600" /></Ic>,
  abcPen: <Ic><text x="0" y="11" fontSize="13" fontFamily="'Liberation Sans',sans-serif" fill="#707070">abc</text><path d="M6 21l2-6 10-8 4 4-10 8z" fill="#f0c050" stroke="#a07820" /></Ic>,
};

// ---------- toolbars ----------
function Grip() {
  return <span className="absolute left-[4px] top-[5px] bottom-[5px] w-0 border-l-2 border-dotted border-[#c4c4c4]" />;
}

type Slot = [string, string];

function Group({ items, className }: { items: Slot[]; className: string }) {
  return (
    <div className={`relative flex items-center h-full shrink-0 ${className}`}>
      <Grip />
      {items.map(([name, w], i) => (
        <span key={i} className={`flex items-center justify-center ${w}`}>{ic[name]}</span>
      ))}
    </div>
  );
}

const s31 = (names: string[]): Slot[] => names.map((n) => [n, 'w-[31px]']);

function Row1() {
  return (
    <div className="flex h-[33px] border-b border-[#c4c4c4] items-stretch">
      <Group className="w-[107px] pl-[11px] border-r border-[#d0d0d0]" items={s31(['file', 'open', 'save'])} />
      <Group
        className="w-[260px] pl-[13px] border-r border-[#d0d0d0]"
        items={[['move', 'w-[30px]'], ['copy', 'w-[29px]'], ['del', 'w-[32px]'], ['undo', 'w-[30px]'], ['drop', 'w-[18px]'], ['redo', 'w-[28px]'], ['drop', 'w-[16px]'], ['ball', 'w-[34px]'], ['pin', 'w-[26px]']]}
      />
      <Group
        className="w-[356px] pl-[11px] border-r border-[#d0d0d0]"
        items={s31(['rats', 'board', 'zoomFit', 'zoomWin', 'zoomIn', 'zoomOut', 'zoomPrev', 'zoomWorld', 'refresh', 'threeD', 'flip'])}
      />
      <Group className="w-[200px] pl-[10px]" items={s31(['grid', 'colors', 'blocks', 'layers', 'cm', 'globe'])} />
      <div className="relative flex items-center h-full pl-[10px]">
        <Grip />
        {['info', 'tableInfo', 'ruler', 'brush', 'sun', 'bomb', 'hourglass'].map((n) => (
          <span key={n} className="flex items-center justify-center w-[31px]">{ic[n]}</span>
        ))}
        <span className="flex items-center justify-center w-[31px] h-[28px] bg-[#cfe3f6] border border-[#a9cbea]">{ic.noEntry}</span>
      </div>
    </div>
  );
}

function Row2() {
  return (
    <div className="flex h-[34px] pt-[2px] border-b border-r border-[#c4c4c4] items-stretch">
      <Group className="w-[199px] pl-[11px] border-r border-[#d0d0d0]" items={s31(['g1', 'g2', 'g3', 'g4', 'g5', 'g6'])} />
      <Group
        className="w-[324px] pl-[12px] border-r border-[#d0d0d0]"
        items={s31(['sL', 'sRect', 'sCirc', 'sArrow', 'sVoid', 'sArc', 'sFrame', 'sFrameC', 'sPart', 'sDel'])}
      />
      <Group className="w-[104px] pl-[13px]" items={s31(['pkg', 'dimV', 'dimH'])} />
      <Group
        className="w-[296px] pl-[15px] border-r border-[#d0d0d0]"
        items={s31(['odb', 'drill', 'drillW', 'cam', 'refs', 'drillDoc', 'tp', 'cells', 'dots'])}
      />
      <Group className="w-[46px] pl-[11px] border-r border-[#d0d0d0]" items={s31(['poly'])} />
      <Group className="w-[168px] pl-[10px] border-r border-[#d0d0d0]" items={s31(['wDoc', 'wBook', 'wChip', 'wCheck', 'wProbe'])} />
      <Group className="grow pl-[11px]" items={s31(['pages', 'bow', 'bowBox', 'help'])} />
    </div>
  );
}

function SideGroup({ names, className }: { names: string[]; className: string }) {
  return (
    <div className={`relative flex flex-col items-center ${className}`}>
      <span className="absolute left-[7px] right-[4px] top-[4px] border-t-2 border-dotted border-[#c4c4c4]" />
      {names.map((n) => (
        <span key={n} className="flex h-[30px] w-full items-center justify-center">{ic[n]}</span>
      ))}
    </div>
  );
}

// ---------- menu, panels, status ----------
const menu: [string, string, string, string][] = [
  ['', 'F', 'ile', 'w-[41px]'], ['', 'I', 'mport', 'w-[62px]'], ['Set', 'u', 'p', 'w-[55px]'], ['', 'D', 'isplay', 'w-[65px]'],
  ['', 'O', 'utline', 'w-[65px]'], ['', 'A', 'dd', 'w-[47px]'], ['', 'E', 'dit', 'w-[41px]'], ['', 'P', 'lace', 'w-[53px]'],
  ['', 'R', 'oute', 'w-[55px]'], ['', 'S', 'hape', 'w-[58px]'], ['', 'C', 'heck', 'w-[56px]'], ['', 'T', 'ools', 'w-[51px]'],
  ['', 'M', 'anufacture', 'w-[101px]'], ['E', 'x', 'port', 'w-[58px]'], ['', 'H', 'elp', 'w-[50px]'],
];

function PanelHeader({ title, barClass }: { title: string; barClass: string }) {
  return (
    <div className="flex items-center h-full pl-[16px] pt-[2px] text-[12px] text-[#333]">
      <span>{title}</span>
      <span className={`h-[4px] bg-[#bdbdbd] ${barClass}`} />
      <span className="ml-[9px] mt-[-3px] flex w-[45px] items-center justify-between">
        <span className="h-[2px] w-[7px] mt-[6px] bg-[#111]" />
        <svg viewBox="0 0 10 10" className="w-[9px] h-[9px]"><path d="M3 .5h6.500v6H7M.5 3h6.500v6.500H.5z" fill="none" stroke="#111" /></svg>
        <svg viewBox="0 0 10 10" className="w-[8px] h-[8px]"><path d="M1 1l8 8M9 1l-8 8" stroke="#111" strokeWidth="1.300" /></svg>
      </span>
    </div>
  );
}

const Chevron = () => (
  <svg viewBox="0 0 10 6" className="w-[10px] h-[6px]"><path d="M.5 .5L5 5l4.500-4.500" fill="none" stroke="#555" /></svg>
);

function Cell({ className, children }: { className: string; children?: ReactNode }) {
  return <div className={`flex items-center h-full pt-[4px] border-l border-[#dcdcdc] shrink-0 ${className}`}>{children}</div>;
}

function Tab({ label, className }: { label: string; className: string }) {
  return <div className={`flex items-center justify-center h-[22px] pt-[2px] border border-b-0 border-[#d9d9d9] bg-[#f0f0f0] ${className}`}>{label}</div>;
}

const miniCells = [
  [1619, 792, 61], [1689, 792, 61], [1759, 792, 60],
  [1619, 862, 61], [1689, 862, 61], [1759, 862, 60], [1829, 862, 60],
];

export default function App() {
  return (
    <div className="flex flex-col w-[1920px] h-[1080px] overflow-hidden bg-[#f0f0f0] text-[#222] font-['Noto_Sans','Open_Sans',sans-serif]">
      {/* Title */}
      <div className="relative flex items-center h-[27px] bg-white shrink-0">
        <svg viewBox="0 0 24 24" className="ml-[2px] w-[20px] h-[20px]">
          <path d="M3 20L12 4l3 3-6 6 9-5-4 9 6-4" fill="none" stroke="#d4382a" strokeWidth="3.500" />
          <path d="M2 6l6 4M16 17l5 4" stroke="#2f9a3f" strokeWidth="3" />
          <circle cx="19" cy="5" r="2.500" fill="#3aa04a" />
          <circle cx="5" cy="21" r="2" fill="#e8c030" />
        </svg>
        <span className="ml-[5px] text-[14.1px] text-[#222] whitespace-pre">OrCAD PCB Designer Standard: top .brd  Project: D:.../micropad v1</span>
        <div className="ml-auto flex items-center">
          <span className="flex justify-center w-[58px]"><span className="w-[12px] border-t border-[#222]" /></span>
          <span className="flex justify-center w-[58px]">
            <svg viewBox="0 0 12 12" className="w-[12px] h-[12px]"><path d="M3 .5h8.500V9H9M.5 3h8.500v8.500H.5z" fill="none" stroke="#222" /></svg>
          </span>
          <span className="flex justify-center w-[58px] mr-[3px]">
            <svg viewBox="0 0 13 13" className="w-[13px] h-[13px]"><path d="M.5 .5l12 12M12.500 .5l-12 12" stroke="#222" /></svg>
          </span>
        </div>
      </div>
      {/* Menu */}
      <div className="relative flex items-center h-[27px] pl-[7px] bg-white shrink-0 text-[14.3px]">
        {menu.map(([a, u, b, w]) => (
          <span key={a + u + b} className={`whitespace-nowrap ${w}`}>{a}<span className="underline underline-offset-2">{u}</span>{b}</span>
        ))}
        <span className="ml-auto mt-[-8px] font-['Liberation_Sans',sans-serif] text-[15px] font-bold tracking-[2px] text-[#444] whitespace-nowrap">
          c<span className="relative">a<span className="absolute left-0 right-[3px] top-[2px] h-[1px] bg-[#d08080]" /></span>dence
        </span>
      </div>
      <div className="h-[3px] bg-[#a31f23] shrink-0" />

      <Row1 />
      <Row2 />

      {/* Work area */}
      <div className="flex h-[922px] shrink-0">
        <div className="flex flex-col w-[35px] shrink-0 border-r border-b border-[#c8c8c8]">
          <SideGroup className="h-[104px] pt-[13px] border-b border-[#d0d0d0]" names={['placeTable', 'u1', 'conn']} />
          <SideGroup className="h-[164px] pt-[12px] border-b border-[#d0d0d0]" names={['route', 'slide', 'fan', 'chev', 'stack']} />
          <SideGroup className="pt-[13px]" names={['line', 'rectB', 'abcPlus', 'abcPen']} />
        </div>
        <div className="ml-[11px] mt-[12px] w-[1526px] h-[900px] bg-black shrink-0">
          <Board />
        </div>
        <div className="ml-[16px] flex flex-col w-[332px] shrink-0">
          <div className="h-[25px]">
            <PanelHeader title="Options" barClass="ml-[1px] w-[207px]" />
          </div>
          <div className="h-[463px] border border-[#8c8c8c] pl-[8px] pt-[33px] text-[11.5px] text-[#222]">
            <div className="leading-[16px]">Active Class and Subclass:</div>
            <div className="ml-[28px] mt-[14px] flex items-center justify-between w-[150px] h-[21px] border border-[#adadad] bg-[#e1e1e1] pl-[4px] pr-[6px] text-[12px]">
              Etch <Chevron />
            </div>
            <div className="mt-[11px] flex items-start">
              <span className="ml-[8px] mt-[4px] flex items-center justify-center w-[12px] h-[13px] bg-[#8c9c8c] border border-[#777]">
                <span className="w-[8px] h-[8px] bg-[#35e035]" />
              </span>
              <div className="ml-[8px] flex items-start w-[150px] h-[24px] border border-b-0 border-[#8c8c8c] bg-white pl-[4px] pr-[6px]">
                <span className="mt-[4px] w-[15px] h-[18px] bg-[#2cf02c] border border-[#222]" />
                <span className="ml-[6px] mt-[1px] text-[11.5px]">Top</span>
                <span className="ml-auto mt-[12px]"><Chevron /></span>
              </div>
            </div>
          </div>
          <div className="flex items-end h-[29px] border-b border-[#b0b0b0] pl-[2px] text-[12.5px] text-[#333]">
            <Tab label="Command" className="w-[85px]" />
            <div className="flex items-center justify-center w-[61px] h-[24px] mb-[-1px] pt-[1px] bg-white border border-b-0 border-[#d9d9d9]">View</div>
            <Tab label="Find" className="w-[52px]" />
            <Tab label="Visibility" className="w-[74px]" />
          </div>
          <div className="h-[24px]">
            <PanelHeader title="View" barClass="ml-[2px] w-[223px]" />
          </div>
          <div className="ml-[5px] mt-[5px] w-[324px] h-[376px] bg-black border-r-2 border-[#8a8a8a]">
            <svg viewBox="1593 670 322 376" className="block w-full h-full">
              <path d="M1593 702.500h322" stroke="#5f7a5c" />
              <path d="M1593 996.500h322" stroke="#8e8e8e" />
              <rect x="1597.500" y="770.500" width="314" height="174" fill="none" stroke="#aeaeae" />
              {miniCells.map(([x, y, w]) => (
                <rect key={`${x}-${y}`} x={x + 0.5} y={y + 0.5} width={w} height="60" fill="none" stroke="#b4b4b4" />
              ))}
            </svg>
          </div>
        </div>
      </div>

      {/* Status bar */}
      <div className="flex items-center h-[32px] shrink-0 text-[12px] text-[#222]">
        <div className="flex items-center w-[167px] pl-[2px] pt-[4px] h-full shrink-0">Idle</div>
        <Cell className="w-[337px] pl-[3px] items-end">
          <span className="block w-[162px] h-[28px] bg-[#00ff00] rounded-t-[1px] self-end" />
        </Cell>
        <Cell className="w-[169px] pl-[3px]">Top</Cell>
        <Cell className="w-[167px] pl-[3px]">72.1000, 4.3000</Cell>
        <Cell className="w-[237px] pl-[5px] gap-[8px]">
          <span className="flex items-center justify-center w-[26px] h-[25px] bg-[#e1e1e1] border border-[#c4c4c4]">P</span>
          <span className="flex items-center justify-center w-[26px] h-[25px] bg-[#e1e1e1] border border-[#c4c4c4]">A</span>
        </Cell>
        <Cell className="w-[168px]" />
        <Cell className="w-[169px] pl-[5px]">Signal Integrity</Cell>
        <Cell className="w-[171px] pl-[5px]">Off</Cell>
        <Cell className="grow pl-[2px] items-end">
          <span className="flex items-center self-end w-[162px] h-[28px] bg-[#00ff00] text-[#0f6b10]">DRC</span>
          <span className="ml-[6px] self-center">0</span>
        </Cell>
      </div>
      <div className="h-[2px] bg-[#3a3a3a] shrink-0" />
    </div>
  );
}
